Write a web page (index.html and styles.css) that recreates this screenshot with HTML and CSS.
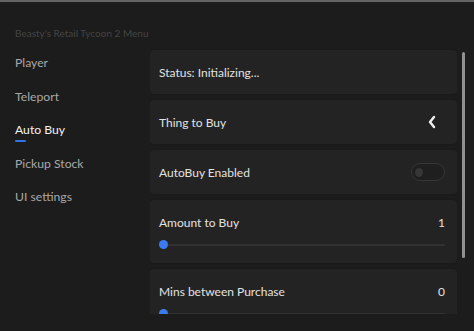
FILE: index.html
```html
<!DOCTYPE html>
<html lang="en">
  <head>
    <meta charset="UTF-8" />
    <title>Beasty's Retail Tycoon 2 Menu</title>
    <link rel="stylesheet" href="styles.css">
  </head>
  <body>
    <div class="topbar"></div>
    <div class="window">
      <div class="sidebar">
        <div class="title">Beasty's Retail Tycoon 2 Menu</div>
        <div class="tab">Player</div>
        <div class="tab">Teleport</div>
        <div class="tab active">Auto Buy</div>
        <div class="tab">Pickup Stock</div>
        <div class="tab">UI settings</div>
      </div>

      <div class="content">
        <div class="scroll">
          <div class="card">
            <span>Status: Initializing...</span>
          </div>

          <div class="card">
            <span>Thing to Buy</span>
            <svg class="chevron" width="10" height="14" viewBox="0 0 10 14">
              <path d="M7 2 L3 7 L7 12" fill="none" stroke="#f2f2f2" stroke-width="2.4" stroke-linecap="round" stroke-linejoin="round" />
            </svg>
          </div>

          <div class="card">
            <span>AutoBuy Enabled</span>
            <div class="toggle"><div class="knob"></div></div>
          </div>

          <div class="card slider-card">
            <div class="row">
              <span>Amount to Buy</span>
              <span>1</span>
            </div>
            <div class="track"><div class="thumb"></div></div>
          </div>

          <div class="card slider-card">
            <div class="row">
              <span>Mins between Purchase</span>
              <span>0</span>
            </div>
            <div class="track"><div class="thumb"></div></div>
          </div>
        </div>
        <div class="scrollbar"></div>
      </div>
    </div>
  </body>
</html>
```

FILE: styles.css
```css
body {
  margin: 0;
  width: 474px;
  height: 331px;
  overflow: hidden;
  background: #1c1c1c;
  font-family: Lato, "Open Sans", sans-serif;
  color: #e2e2e2;
}
.topbar {
  height: 2px;
  background: #646464;
}
.window {
  display: flex;
  height: 329px;
}
.sidebar {
  width: 135px;
  padding-left: 15px;
  flex-shrink: 0;
}
.title {
  margin-top: 25px;
  font-size: 10px;
  color: #444;
  height: 13px;
  line-height: 13px;
  margin-bottom: 15px;
}
.tab {
  font-size: 12.2px;
  color: #a8a8a8;
  height: 33.5px;
  line-height: 16px;
}
.tab.active {
  color: #f2f2f2;
  position: relative;
}
.tab.active::after {
  content: "";
  position: absolute;
  left: 0;
  top: 18px;
  width: 11px;
  height: 2px;
  border-radius: 1px;
  background: #2f74e6;
}
.content {
  display: flex;
  flex: 1;
}
.scroll {
  width: 307px;
  height: 312px;
  overflow: hidden;
  padding-top: 48px;
  box-sizing: border-box;
  display: flex;
  flex-direction: column;
  gap: 6px;
  flex-shrink: 0;
}
.card {
  flex-shrink: 0;
  height: 44px;
  background: #232323;
  border-radius: 4px;
  box-shadow: 0 0 2px rgba(0, 0, 0, 0.25);
  padding: 0 12px 0 9px;
  display: flex;
  align-items: center;
  justify-content: space-between;
  font-size: 12px;
  box-sizing: border-box;
}
.chevron {
  margin-right: 8px;
}
.toggle {
  width: 29px;
  height: 16px;
  border: 1.5px solid #363636;
  border-radius: 10px;
  background: #1f1f1f;
  display: flex;
  align-items: center;
  padding-left: 3px;
  box-sizing: content-box;
}
.knob {
  width: 8px;
  height: 9px;
  border-radius: 50%;
  background: #363636;
}
.slider-card {
  height: 63px;
  flex-direction: column;
  align-items: stretch;
  justify-content: flex-start;
  padding-top: 16px;
}
.row {
  display: flex;
  justify-content: space-between;
  height: 14px;
  line-height: 14px;
}
.track {
  position: relative;
  margin-top: 14px;
  height: 2px;
  background: #323232;
  border-radius: 1px;
}
.thumb {
  position: absolute;
  left: 0;
  top: -4px;
  width: 9px;
  height: 9px;
  border-radius: 50%;
  background: #3a7cf0;
}
.scrollbar {
  margin-left: 5px;
  margin-top: 50px;
  width: 3px;
  height: 206px;
  border-radius: 2px;
  background: #909090;
}
```
